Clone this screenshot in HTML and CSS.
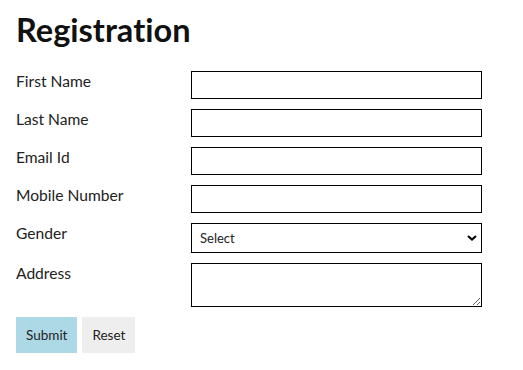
FILE: index.html
```html
<!DOCTYPE html>
<html lang="en">
<head>
<meta charset="utf-8">
<title>Registration</title>
<link rel="stylesheet" href="styles.css">
</head>
<body>
<main class="page">
  <h1 class="title">Registration</h1>
  <form class="form">
    <label class="label" for="fn">First Name</label>
    <input class="field" id="fn" type="text">
    <label class="label" for="ln">Last Name</label>
    <input class="field" id="ln" type="text">
    <label class="label" for="em">Email Id</label>
    <input class="field" id="em" type="text">
    <label class="label" for="mn">Mobile Number</label>
    <input class="field" id="mn" type="text">
    <label class="label" for="gd">Gender</label>
    <div class="select-wrap">
      <select class="select" id="gd">
        <option>Select</option>
        <option>Male</option>
        <option>Female</option>
      </select>
      <svg class="chevron" width="10" height="6" viewBox="0 0 10 6" aria-hidden="true"><path d="M1 1 L5 4.6 L9 1" fill="none" stroke="#000" stroke-width="2"/></svg>
    </div>
    <label class="label" for="ad">Address</label>
    <textarea class="area" id="ad"></textarea>
    <div class="actions">
      <button type="submit" class="btn btn-submit">Submit</button>
      <button type="reset" class="btn btn-reset">Reset</button>
    </div>
  </form>
</main>
</body>
</html>
```
FILE: styles.css
```css
* { box-sizing: border-box; }
html, body { margin: 0; padding: 0; background: #fff; }
body {
  font-family: Lato, "Open Sans", sans-serif;
  font-variant-ligatures: none;
  color: #222;
}
.page {
  padding: 11px 16px 16px;
}
.title {
  margin: 0;
  font-size: 32.5px;
  font-weight: 700;
  line-height: 38px;
  color: #111;
}
.form {
  margin-top: 22px;
  display: grid;
  grid-template-columns: 175px 291px;
  row-gap: 10px;
  align-items: start;
}
.label {
  font-size: 15.6px;
  line-height: 18px;
  padding-top: 1px;
  color: #222;
}
.field {
  height: 28px;
  width: 291px;
  border: 1px solid #000;
  border-radius: 0;
  margin: 0;
  padding: 0 6px;
  font-family: inherit;
  background: #fff;
}
.select-wrap {
  position: relative;
  width: 291px;
  height: 30px;
}
.select {
  appearance: none;
  -webkit-appearance: none;
  width: 100%;
  height: 30px;
  border: 1px solid #000;
  border-radius: 0;
  background: #fff;
  margin: 0;
  padding: 0 8px;
  font-family: Lato, sans-serif;
  font-variant-ligatures: none;
  font-size: 13px;
  color: #222;
}
.chevron {
  position: absolute;
  right: 5px;
  top: 12px;
  pointer-events: none;
}
.area {
  width: 291px;
  height: 44px;
  border: 1px solid #000;
  border-radius: 0;
  margin: 0;
  padding: 4px 6px;
  font-family: inherit;
  display: block;
}
.actions {
  grid-column: 1 / -1;
  display: flex;
  gap: 5px;
}
.btn {
  height: 36px;
  padding: 0 10px;
  border: none;
  border-radius: 0;
  font-family: Lato, sans-serif;
  font-variant-ligatures: none;
  font-size: 13.5px;
  color: #222;
  cursor: pointer;
}
.btn-submit { background: #add8e6; }
.btn-reset { background: #eeeeee; }
```
